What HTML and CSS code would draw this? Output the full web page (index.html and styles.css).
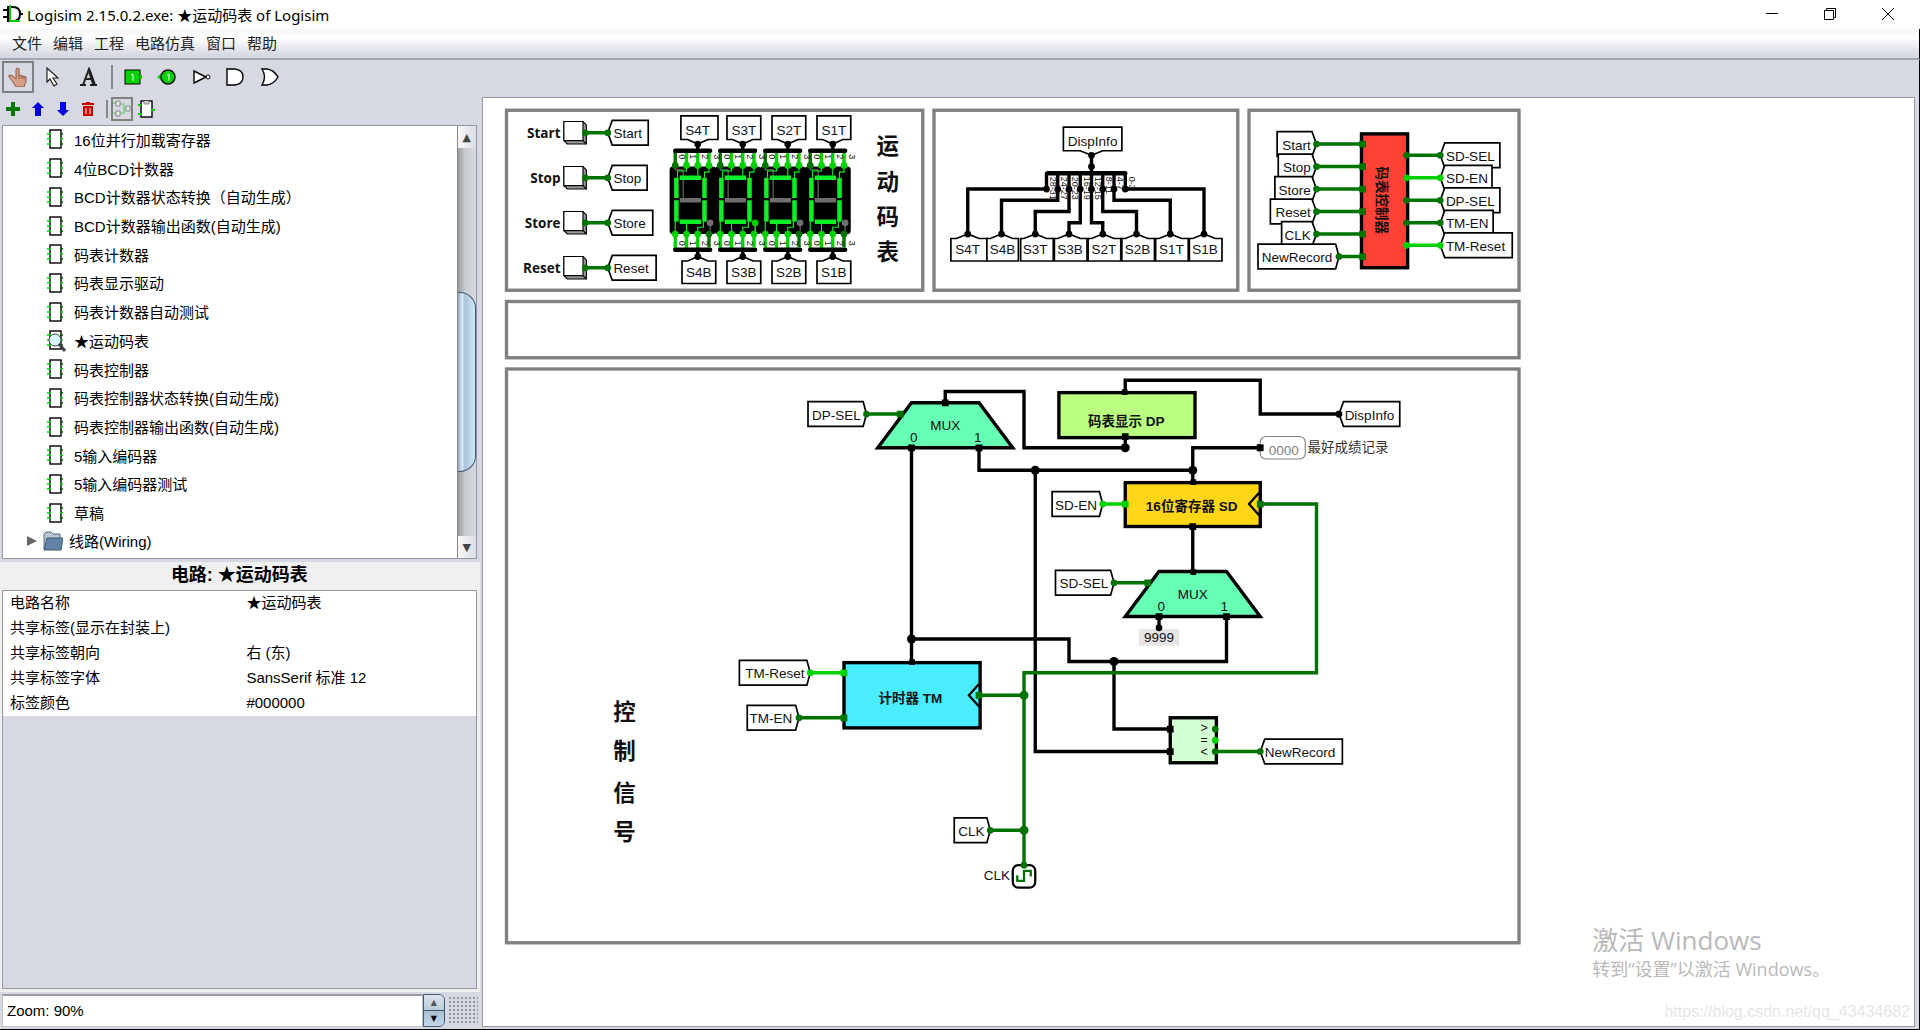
FILE: index.html
```html
<!DOCTYPE html>
<html lang="zh-CN">
<head>
  <meta charset="UTF-8" />
  <meta name="viewport" content="width=device-width, initial-scale=1" />
  <title>Logisim 2.15.0.2.exe: ★运动码表 of Logisim</title>
  <link rel="stylesheet" href="styles.css">
</head>
<body>

<!-- Shared symbols -->
<svg class="defs" aria-hidden="true">
  <symbol id="chip" viewBox="0 0 20 20">
    <rect x="3" y="1" width="11" height="18" fill="#fff" stroke="#000" stroke-width="1.4" />
    <path d="M0 5h4M0 10h4M0 15h4M13 10h3" stroke="#00d200" stroke-width="1.4" />
    <path d="M13 5h3M13 15h3" stroke="#005500" stroke-width="1.4" />
  </symbol>
  <!-- 7-segment digit with its two splitters, origin at the left pin column -->
  <symbol id="digit" viewBox="0 0 50 110" overflow="visible">
    <path class="bus" d="M20 0V6" />
    <path class="on" d="M10 7V20M20 7V20M30 7V20" />
    <path class="off" d="M0 7V20" />
    <path class="on" d="M0 80V93M10 80V93M20 80V93" />
    <path class="spine" d="M0 6H31M0 94H31" />
    <path class="bus" d="M20 94V100" />
    <rect x="-5" y="20" width="41" height="60" rx="3" />
    <path d="M0 20V23H7V48M31 70V80" fill="none" stroke="#6e6e6e" />
    <path d="M10 20V24H2V30M20 20V28M30 20V25H26V30M0 80V69M10 80V70M20 80V74H25V69" fill="none" stroke="#0cf028" />
    <path d="M4 28h19v4H4zM-1 30h4v18h-4zM24 30h4v18h-4zM-1 50h4v19h-4zM24 50h4v19h-4zM4 67h19v4H4z" fill="#0cf028" />
    <path d="M4 48h19v4H4z" fill="#6e6e6e" />
    <g fill="#00d200"><circle cx="10" cy="19" r="3" /><circle cx="20" cy="19" r="3" /><circle cx="30" cy="19" r="3" /><circle cx="0" cy="80" r="3" /><circle cx="10" cy="80" r="3" /><circle cx="20" cy="80" r="3" /></g>
    <circle cx="0" cy="19" r="3" fill="#007300" />
    <circle cx="20" cy="0" r="3" /><circle cx="20" cy="100" r="3" />
  </symbol>
</svg>

<div class="window">

  <header class="titlebar">
    <svg class="app-icon" viewBox="0 0 20 20" width="20" height="20">
      <path d="M5 3h5c5 0 7 3 7 7s-2 7-7 7H5z" fill="#fff" stroke="#000" stroke-width="2" />
      <path d="M0 6h4M0 13h4M17 10h3" stroke="#000" stroke-width="2" />
      <path d="M7 1v16h10" fill="none" stroke="#00c800" stroke-width="2" />
    </svg>
    <h1>Logisim 2.15.0.2.exe: ★运动码表 of Logisim</h1>
    <div class="window-buttons">
      <button aria-label="最小化"><svg viewBox="0 0 12 12" width="12" height="12"><path d="M0 5.5h12" /></svg></button>
      <button aria-label="还原"><svg viewBox="0 0 12 12" width="12" height="12"><path d="M.5 2.5h9v9h-9zM2.500 2.500v-2h9v9h-2" /></svg></button>
      <button aria-label="关闭"><svg viewBox="0 0 12 12" width="12" height="12"><path d="M0 0l12 12M12 0L0 12" /></svg></button>
    </div>
  </header>

  <nav class="menubar">
    <button>文件</button>
    <button>编辑</button>
    <button>工程</button>
    <button>电路仿真</button>
    <button>窗口</button>
    <button>帮助</button>
  </nav>

  <div class="toolbar">
    <div class="tools">
      <button class="tool selected" aria-label="戳工具">
        <svg viewBox="0 0 20 20" width="20" height="20"><path d="M1 8l4 1 3 3V2q1-2 3 0v6l7 2v4l-2 6H8l-3-5-4-5z" fill="#d69f86" stroke="#8a5a44" /><path d="M11 8v4M14 9v3M16 10v2" stroke="#8a5a44" /></svg>
      </button>
      <button class="tool" aria-label="编辑工具">
        <svg viewBox="0 0 20 20" width="20" height="20"><path d="M4 1v14l3-3 4 7 3-2-4-6h5z" fill="#fff" stroke="#222" stroke-width="1.2" /></svg>
      </button>
      <button class="tool" aria-label="文本工具">
        <svg viewBox="0 0 20 20" width="20" height="20"><path d="M2 18h6M12 18h7M5 18l6-16 6 16M7 12h8" fill="none" stroke="#222" stroke-width="2" /><path d="M11 3l5 15" stroke="#222" stroke-width="3" /></svg>
      </button>
    </div>
    <span class="separator"></span>
    <div class="gates">
      <button class="tool" aria-label="输入引脚">
        <svg viewBox="0 0 20 20" width="20" height="20"><rect x="2" y="3" width="15" height="14" fill="#00d200" stroke="#000" /><path d="M17 8h2v4h-2z" fill="#00d200" /><path d="M8 8l2-1v7" fill="none" stroke="#fff" /></svg>
      </button>
      <button class="tool" aria-label="输出引脚">
        <svg viewBox="0 0 20 20" width="20" height="20"><path d="M0 10l5-4v8z" fill="#00d200" /><circle cx="11" cy="10" r="7" fill="#00d200" stroke="#000" stroke-width="1.4" /><path d="M10 8l2-1v7" fill="none" stroke="#fff" /></svg>
      </button>
      <button class="tool" aria-label="非门">
        <svg viewBox="0 0 20 20" width="20" height="20"><path d="M3 4v12l12-6z" fill="#fff" stroke="#000" stroke-width="1.4" /><circle cx="17" cy="10" r="2" fill="#fff" stroke="#000" /></svg>
      </button>
      <button class="tool" aria-label="与门">
        <svg viewBox="0 0 20 20" width="20" height="20"><path d="M2 2h8q8 1 8 8t-8 8H2z" fill="#fff" stroke="#000" stroke-width="1.4" /></svg>
      </button>
      <button class="tool" aria-label="或门">
        <svg viewBox="0 0 20 20" width="20" height="20"><path d="M3 2h5q7 1 11 8-4 7-11 8H3q5-8 0-16z" fill="#fff" stroke="#000" stroke-width="1.4" /></svg>
      </button>
    </div>
  </div>

  <main class="workspace">

    <aside class="side">

      <div class="subtoolbar">
        <button aria-label="添加电路"><svg viewBox="0 0 16 16" width="16" height="16"><path d="M6 1h4v5h5v4h-5v5H6v-5H1V6h5z" fill="#007a00" /></svg></button>
        <button aria-label="上移"><svg viewBox="0 0 16 16" width="16" height="16"><path d="M8 1l6 6h-3v8H5V7H2z" fill="#0000e0" /></svg></button>
        <button aria-label="下移"><svg viewBox="0 0 16 16" width="16" height="16"><path d="M8 15l6-6h-3V1H5v8H2z" fill="#0000e0" /></svg></button>
        <button aria-label="删除电路"><svg viewBox="0 0 16 16" width="16" height="16"><path d="M2 2h4V1h4v1h4v2H2zM3 5h10v10H3z" fill="#cc0000" /><path d="M6 7v6M10 7v6" stroke="#fff" /></svg></button>
        <span class="separator"></span>
        <button class="selected" aria-label="显示电路"><svg viewBox="0 0 18 18" width="18" height="18"><path d="M0 3h3M0 13h3M7 4h4v4h2M7 13h4v-3h2" fill="none" stroke="#96d09a" stroke-width="2" /><path d="M3 1h4v5H3zM3 11h4v5H3zM13 6h4v5h-4z" fill="#e6e8ec" stroke="#8a8a8a" /></svg></button>
        <button aria-label="显示外观"><svg viewBox="0 0 18 18" width="18" height="18"><rect x="4" y="1" width="11" height="16" fill="#fff" stroke="#000" stroke-width="1.4" /><path d="M7 1v3h5V1" fill="#ccc" stroke="#888" /><path d="M1 5h3M1 14h4M14 10h4" stroke="#00d200" stroke-width="2" /></svg></button>
      </div>

      <div class="explorer">
        <div class="tree">
          <ul class="circuits">
            <li><svg class="chip"><use href="#chip" /></svg>16位并行加载寄存器</li>
            <li><svg class="chip"><use href="#chip" /></svg>4位BCD计数器</li>
            <li><svg class="chip"><use href="#chip" /></svg>BCD计数器状态转换（自动生成）</li>
            <li><svg class="chip"><use href="#chip" /></svg>BCD计数器输出函数(自动生成)</li>
            <li><svg class="chip"><use href="#chip" /></svg>码表计数器</li>
            <li><svg class="chip"><use href="#chip" /></svg>码表显示驱动</li>
            <li><svg class="chip"><use href="#chip" /></svg>码表计数器自动测试</li>
            <li><svg class="chip"><use href="#chip" /><circle cx="8" cy="10" r="6" fill="#d8fbff" stroke="#444" /><path d="M12 14l6 7" stroke="#444" stroke-width="3" /></svg>★运动码表</li>
            <li><svg class="chip"><use href="#chip" /></svg>码表控制器</li>
            <li><svg class="chip"><use href="#chip" /></svg>码表控制器状态转换(自动生成)</li>
            <li><svg class="chip"><use href="#chip" /></svg>码表控制器输出函数(自动生成)</li>
            <li><svg class="chip"><use href="#chip" /></svg>5输入编码器</li>
            <li><svg class="chip"><use href="#chip" /></svg>5输入编码器测试</li>
            <li><svg class="chip"><use href="#chip" /></svg>草稿</li>
          </ul>
          <div class="library">
            <svg viewBox="0 0 10 10" width="10" height="10"><path d="M0 0l10 5-10 5z" fill="#666" /></svg>
            <svg viewBox="0 0 20 20" width="20" height="20"><path d="M1 18V3l2-2h5l2 2h7v4" fill="#b9c6d2" stroke="#52677c" /><path d="M1 19L4 7h16l-2 12z" fill="#6283a5" stroke="#3d566f" /></svg>
            <span>线路(Wiring)</span>
          </div>
        </div>
        <div class="scrollbar">
          <button aria-label="向上滚动">▲</button>
          <div class="track"><div class="thumb"></div></div>
          <button aria-label="向下滚动">▼</button>
        </div>
      </div>

      <section class="attributes">
        <h2>电路: ★运动码表</h2>
        <div class="attr-frame">
          <table>
            <tr><th scope="row">电路名称</th><td>★运动码表</td></tr>
            <tr><th scope="row">共享标签(显示在封装上)</th><td></td></tr>
            <tr><th scope="row">共享标签朝向</th><td>右 (东)</td></tr>
            <tr><th scope="row">共享标签字体</th><td>SansSerif 标准 12</td></tr>
            <tr><th scope="row">标签颜色</th><td>#000000</td></tr>
          </table>
        </div>
      </section>

      <div class="zoom">
        <input type="text" value="Zoom: 90%" aria-label="Zoom" />
        <div class="spinner">
          <button aria-label="放大">▲</button>
          <button aria-label="缩小">▼</button>
        </div>
        <span class="grip"></span>
      </div>

    </aside>

    <section class="canvas">
      <svg class="circuit" viewBox="0 0 960 800">

        <!-- Frames -->
        <g class="frame">
          <rect x="20" y="10" width="370" height="160" />
          <rect x="400" y="10" width="270" height="160" />
          <rect x="680" y="10" width="240" height="160" />
          <rect x="20" y="180" width="900" height="50" />
          <rect x="20" y="240" width="900" height="510" />
        </g>

        <!-- Push buttons -->
        <g class="push">
          <path d="M71 20h17l3 3v17H74l-3-3z" /><path d="M71 20h17v17H71zM88 37l3 3" />
          <path d="M71 60h17l3 3v17H74l-3-3z" /><path d="M71 60h17v17H71zM88 77l3 3" />
          <path d="M71 100h17l3 3v17H74l-3-3z" /><path d="M71 100h17v17H71zM88 117l3 3" />
          <path d="M71 140h17l3 3v17H74l-3-3z" /><path d="M71 140h17v17H71zM88 157l3 3" />
        </g>
        <g class="push-label">
          <text x="68" y="35">Start</text>
          <text x="68" y="75">Stop</text>
          <text x="68" y="115">Store</text>
          <text x="68" y="155">Reset</text>
        </g>
        <g class="tunnel">
          <path d="M110 30l4-11h32v22h-32z" /><text x="115" y="35">Start</text>
          <path d="M110 70l4-11h31v22h-31z" /><text x="115" y="75">Stop</text>
          <path d="M110 110l4-11h36v22h-36z" /><text x="115" y="115">Store</text>
          <path d="M110 150l4-11h39v22h-39z" /><text x="115" y="155">Reset</text>
        </g>
        <path class="off" d="M90 30h20M90 70h20M90 110h20M90 150h20" />
        <g class="dot-off">
          <circle cx="90" cy="30" r="3" /><circle cx="110" cy="30" r="3" />
          <circle cx="90" cy="70" r="3" /><circle cx="110" cy="70" r="3" />
          <circle cx="90" cy="110" r="3" /><circle cx="110" cy="110" r="3" />
          <circle cx="90" cy="150" r="3" /><circle cx="110" cy="150" r="3" />
        </g>

        <!-- Stopwatch display -->
        <g class="tunnel middle">
          <path d="M190 40l-9-4h-6V15h33v21h-9z" /><text x="190" y="32">S4T</text>
          <path d="M230 40l-9-4h-5V15h30v21h-7z" /><text x="231" y="32">S3T</text>
          <path d="M270 40l-9-4h-5V15h30v21h-7z" /><text x="271" y="32">S2T</text>
          <path d="M310 40l-9-4h-5V15h30v21h-7z" /><text x="311" y="32">S1T</text>
          <path d="M190 140l-9 4h-5v20h30v-20h-7z" /><text x="191" y="158">S4B</text>
          <path d="M230 140l-9 4h-5v20h30v-20h-7z" /><text x="231" y="158">S3B</text>
          <path d="M270 140l-9 4h-5v20h30v-20h-7z" /><text x="271" y="158">S2B</text>
          <path d="M310 140l-9 4h-5v20h30v-20h-7z" /><text x="311" y="158">S1B</text>
        </g>
        <use href="#digit" x="170" y="40" width="50" height="110" />
        <use href="#digit" x="210" y="40" width="50" height="110" />
        <use href="#digit" x="250" y="40" width="50" height="110" />
        <use href="#digit" x="290" y="40" width="50" height="110" />
        <path class="off" d="M200 120v12M280 120v12M320 120v12" />
        <path class="on" d="M240 120v12" />
        <g class="dot-off"><circle cx="200" cy="120" r="3" /><circle cx="280" cy="120" r="3" /><circle cx="320" cy="120" r="3" /></g>
        <path d="M241 110v10" stroke="#0cf028" />
        <g class="dot-on"><circle cx="240" cy="120" r="3" /><circle cx="241" cy="110" r="3" /></g>
        <g fill="#6e6e6e"><circle cx="201" cy="110" r="3" /><circle cx="281" cy="110" r="3" /><circle cx="321" cy="110" r="3" /></g>
        <g class="bits">
          <text transform="translate(173 49) rotate(90)">0</text><text transform="translate(183 49) rotate(90)">1</text><text transform="translate(194 49) rotate(90)">2</text><text transform="translate(204 49) rotate(90)">3</text>
          <text transform="translate(213 49) rotate(90)">0</text><text transform="translate(223 49) rotate(90)">1</text><text transform="translate(234 49) rotate(90)">2</text><text transform="translate(244 49) rotate(90)">3</text>
          <text transform="translate(253 49) rotate(90)">0</text><text transform="translate(263 49) rotate(90)">1</text><text transform="translate(274 49) rotate(90)">2</text><text transform="translate(284 49) rotate(90)">3</text>
          <text transform="translate(293 49) rotate(90)">0</text><text transform="translate(303 49) rotate(90)">1</text><text transform="translate(314 49) rotate(90)">2</text><text transform="translate(324 49) rotate(90)">3</text>
          <text transform="translate(173 126) rotate(90)">0</text><text transform="translate(183 126) rotate(90)">1</text><text transform="translate(194 126) rotate(90)">2</text><text transform="translate(204 126) rotate(90)">3</text>
          <text transform="translate(213 126) rotate(90)">0</text><text transform="translate(223 126) rotate(90)">1</text><text transform="translate(234 126) rotate(90)">2</text><text transform="translate(244 126) rotate(90)">3</text>
          <text transform="translate(253 126) rotate(90)">0</text><text transform="translate(263 126) rotate(90)">1</text><text transform="translate(274 126) rotate(90)">2</text><text transform="translate(284 126) rotate(90)">3</text>
          <text transform="translate(293 126) rotate(90)">0</text><text transform="translate(303 126) rotate(90)">1</text><text transform="translate(314 126) rotate(90)">2</text><text transform="translate(324 126) rotate(90)">3</text>
        </g>
        <g class="heading">
          <text x="359" y="49">运</text>
          <text x="359" y="81">动</text>
          <text x="359" y="112">码</text>
          <text x="359" y="143">表</text>
        </g>

        <!-- DispInfo splitter -->
        <g class="tunnel middle">
          <path d="M540 50l-10-4h-15V25h52v21h-17z" /><text x="541" y="42">DispInfo</text>
          <path d="M430 120l-10 4h-5v20h32v-20h-7z" /><text x="430" y="138">S4T</text>
          <path d="M460 120l-10 4h-3v20h28v-20h-5z" /><text x="461" y="138">S4B</text>
          <path d="M490 120l-10 4h-3v20h29v-20h-6z" /><text x="490" y="138">S3T</text>
          <path d="M520 120l-10 4h-3v20h29v-20h-6z" /><text x="521" y="138">S3B</text>
          <path d="M550 120l-10 4h-3v20h29v-20h-6z" /><text x="551" y="138">S2T</text>
          <path d="M580 120l-10 4h-3v20h29v-20h-6z" /><text x="581" y="138">S2B</text>
          <path d="M610 120l-10 4h-3v20h29v-20h-6z" /><text x="611" y="138">S1T</text>
          <path d="M640 120l-10 4h-3v20h29v-20h-6z" /><text x="641" y="138">S1B</text>
        </g>
        <path class="bus" d="M540 50V65M500 65V80H430V120M510 65V90H460V120M520 65V100H490V120M530 65V110H520V120M540 65V110H550V120M550 65V100H580V120M560 65V90H610V120M570 65V80H640V120" />
        <path class="spine" d="M501 66H570" />
        <g>
          <circle cx="540" cy="50" r="3" /><circle cx="540" cy="60" r="3" />
          <circle cx="500" cy="80" r="3" /><circle cx="510" cy="80" r="3" /><circle cx="520" cy="80" r="3" /><circle cx="530" cy="80" r="3" />
          <circle cx="540" cy="80" r="3" /><circle cx="550" cy="80" r="3" /><circle cx="560" cy="80" r="3" /><circle cx="570" cy="80" r="3" />
          <circle cx="430" cy="120" r="3" /><circle cx="460" cy="120" r="3" /><circle cx="490" cy="120" r="3" /><circle cx="520" cy="120" r="3" />
          <circle cx="550" cy="120" r="3" /><circle cx="580" cy="120" r="3" /><circle cx="610" cy="120" r="3" /><circle cx="640" cy="120" r="3" />
        </g>
        <g class="bits">
          <text transform="translate(503 69) rotate(90)">28-31</text>
          <text transform="translate(513 69) rotate(90)">24-27</text>
          <text transform="translate(523 69) rotate(90)">20-23</text>
          <text transform="translate(533 69) rotate(90)">16-19</text>
          <text transform="translate(543 69) rotate(90)">12-15</text>
          <text transform="translate(553 69) rotate(90)">8-11</text>
          <text transform="translate(563 69) rotate(90)">4-7</text>
          <text transform="translate(573 69) rotate(90)">0-3</text>
        </g>

        <!-- Controller -->
        <g class="tunnel end">
          <path d="M740 40l-4-11h-31v22h31z" /><text x="735" y="45">Start</text>
          <path d="M740 60l-4-11h-30v22h30z" /><text x="735" y="65">Stop</text>
          <path d="M740 80l-4-11h-33v22h33z" /><text x="735" y="85">Store</text>
          <path d="M740 100l-4-11h-37v22h37z" /><text x="735" y="105">Reset</text>
          <path d="M740 120l-4-11h-27v22h27z" /><text x="735" y="125">CLK</text>
          <path d="M760 140l-3-11h-69v22h69z" /><text x="754" y="145">NewRecord</text>
        </g>
        <g class="tunnel">
          <path d="M850 50l4-11h49v22h-49z" /><text x="855" y="55">SD-SEL</text>
          <path d="M850 70l4-11h42v22h-42z" /><text x="855" y="75">SD-EN</text>
          <path d="M850 90l4-11h49v22h-49z" /><text x="855" y="95">DP-SEL</text>
          <path d="M850 110l4-11h43v22h-43z" /><text x="855" y="115">TM-EN</text>
          <path d="M850 130l4-11h60v22h-60z" /><text x="855" y="135">TM-Reset</text>
        </g>
        <rect class="block" x="780" y="31" width="41" height="119" fill="#ff4238" />
        <path class="off" d="M740 40h40M740 60h40M740 80h40M740 100h40M740 120h40M760 140h20M820 50h30M820 90h30M820 110h30" />
        <path class="on" d="M820 70h30M820 130h30" />
        <g class="dot-off">
          <path d="M778 37h6v6h-6zM778 57h6v6h-6zM778 77h6v6h-6zM778 97h6v6h-6zM778 117h6v6h-6zM778 137h6v6h-6z" />
          <circle cx="740" cy="40" r="3" /><circle cx="740" cy="60" r="3" /><circle cx="740" cy="80" r="3" /><circle cx="740" cy="100" r="3" /><circle cx="740" cy="120" r="3" /><circle cx="760" cy="140" r="3" />
          <circle cx="820" cy="50" r="3" /><circle cx="850" cy="50" r="3" /><circle cx="820" cy="90" r="3" /><circle cx="850" cy="90" r="3" /><circle cx="820" cy="110" r="3" /><circle cx="850" cy="110" r="3" />
        </g>
        <g class="dot-on">
          <circle cx="820" cy="70" r="3" /><circle cx="850" cy="70" r="3" /><circle cx="820" cy="130" r="3" /><circle cx="850" cy="130" r="3" />
        </g>
        <text class="block-label" transform="translate(794 90) rotate(90)">码表控制器</text>

        <!-- Data path -->
        <path class="block" d="M380 270h60l30 40H350z" fill="#66ffb3" />
        <path class="block" d="M600 420h60l30 40H570z" fill="#66ffb3" />
        <rect class="block" x="511" y="261" width="121" height="40" fill="#bbff80" />
        <rect class="block" x="570" y="341" width="120" height="39" fill="#ffd616" />
        <rect class="block" x="320" y="501" width="121" height="58" fill="#48eeff" />
        <rect class="block" x="610" y="550" width="41" height="40" fill="#d3ffd3" />
        <path class="edge" d="M689 350l-9 10 9 10M440 520l-9 10 9 10" />

        <path class="bus" d="M410 270V260H480V310H570V300M570 260V250H690V280H760" />
        <path class="bus" d="M440 310V330H630M630 340V310H690M490 330V580H610M630 380V420" />
        <path class="bus" d="M380 310V500M380 480H520V500H660V460M560 500V560H610M600 460V470" />
        <path class="off" d="M340 280H370M560 430H590M690 360H740V510H480V680M440 530H480M450 650H480M280 550H320M650 580H690" />
        <path class="on" d="M550 360H570M290 510H320" />

        <g class="pins">
          <path d="M407 267h6v6h-6zM377 307h6v6h-6zM437 307h6v6h-6zM567 297h6v6h-6zM567 258h5v5h-5zM687 307h6v6h-6z" />
          <path d="M628 338h5v5h-5zM627 377h6v6h-6zM628 418h5v5h-5zM597 457h6v6h-6zM657 457h6v6h-6zM378 498h5v5h-5zM607 557h6v6h-6zM607 577h6v6h-6z" />
          <circle cx="570" cy="310" r="4" /><circle cx="490" cy="330" r="4" /><circle cx="630" cy="330" r="4" />
          <circle cx="380" cy="480" r="4" /><circle cx="560" cy="500" r="4" /><circle cx="760" cy="280" r="3" />
        </g>

        <g class="tunnel end">
          <path d="M340 280l-3-11h-49v22h49z" /><text x="335" y="285">DP-SEL</text>
          <path d="M550 360l-3-11h-42v22h42z" /><text x="545" y="365">SD-EN</text>
          <path d="M560 430l-3-11h-49v22h49z" /><text x="555" y="435">SD-SEL</text>
          <path d="M290 510l-3-11h-60v22h60z" /><text x="285" y="515">TM-Reset</text>
          <path d="M280 550l-3-11h-43v22h43z" /><text x="274" y="555">TM-EN</text>
          <path d="M450 650l-3-11h-29v22h29z" /><text x="445" y="655">CLK</text>
        </g>
        <g class="tunnel">
          <path d="M760 280l4-11h50v22h-50z" /><text x="765" y="285">DispInfo</text>
          <path d="M690 580l4-11h69v22h-69z" /><text x="694" y="585">NewRecord</text>
        </g>

        <!-- Redraw wire ends over the tunnels -->
        <circle cx="760" cy="280" r="3" />

        <rect x="470" y="681" width="20" height="20" rx="5" fill="#fff" stroke="#000" stroke-width="2" />
        <path d="M474 690v5h6v-9h6v5" fill="none" stroke="#007300" stroke-width="2" />
        <g class="dot-off">
          <path d="M367 277h6v6h-6zM587 427h6v6h-6zM687 357h6v6h-6zM437 527h6v6h-6zM317 547h6v6h-6z" />
          <circle cx="340" cy="280" r="3" /><circle cx="560" cy="430" r="3" /><circle cx="280" cy="550" r="3" /><circle cx="450" cy="650" r="3" />
          <circle cx="480" cy="530" r="4" /><circle cx="480" cy="650" r="4" /><circle cx="480" cy="681" r="3" />
          <circle cx="650" cy="560" r="3" /><circle cx="650" cy="580" r="3" /><circle cx="690" cy="580" r="3" />
        </g>
        <g class="dot-on">
          <path d="M567 357h6v6h-6zM317 507h6v6h-6z" />
          <circle cx="550" cy="360" r="3" /><circle cx="290" cy="510" r="3" /><circle cx="650" cy="570" r="3" />
        </g>

        <rect x="690" y="300" width="40" height="20" rx="5" fill="#fff" stroke="#808080" />
        <path d="M687 307h6v6h-6z" />
        <rect x="582" y="471" width="36" height="15" fill="#e6e6e6" />
        <circle cx="600" cy="470" r="3" />

        <g class="label middle">
          <text x="410" y="294">MUX</text><text x="382" y="305">0</text><text x="439" y="305">1</text>
          <text x="630" y="444">MUX</text><text x="602" y="455">0</text><text x="658" y="455">1</text>
          <text x="711" y="316" class="probe">0000</text>
          <text x="600" y="483">9999</text>
          <text x="456" y="694">CLK</text>
          <text x="640" y="563" class="sign">&gt;</text><text x="640" y="573" class="sign">=</text><text x="640" y="584" class="sign">&lt;</text>
        </g>
        <text class="note" x="732" y="314">最好成绩记录</text>
        <g class="block-label">
          <text x="571" y="291">码表显示 DP</text>
          <text x="629" y="366">16位寄存器 SD</text>
          <text x="379" y="537">计时器 TM</text>
        </g>
        <g class="heading">
          <text x="125" y="552">控</text>
          <text x="125" y="587">制</text>
          <text x="125" y="624">信</text>
          <text x="125" y="659">号</text>
        </g>
      </svg>

      <div class="activate">
        <strong>激活 Windows</strong>
        <span>转到“设置”以激活 Windows。</span>
      </div>
      <div class="source">https://blog.csdn.net/qq_43434682</div>
    </section>

  </main>
</div>

</body>
</html>
```
FILE: styles.css
```css
* { box-sizing: border-box; }
body {
  margin: 0;
  background: #d6d9e1;
  color: #000;
  font-family: "Liberation Sans", "Noto Sans CJK SC", sans-serif;
  font-size: 15px;
}
button { margin: 0; padding: 0; border: none; background: none; color: inherit; font: inherit; }
h1, h2, ul { margin: 0; padding: 0; }
.defs { position: absolute; width: 0; height: 0; }

.window {
  display: flex;
  flex-direction: column;
  height: 100vh;
  border-bottom: 1px solid #000;
}

/* Title bar and menu */
.titlebar { display: flex; align-items: center; height: 29px; padding: 0 3px 1px; background: #fff; }
.titlebar h1 { margin-left: 4px; font: 400 15px "Noto Sans", "Noto Sans CJK SC", sans-serif; }
.window-buttons { display: flex; margin-left: auto; }
.window-buttons button { display: grid; place-items: center; width: 58px; height: 28px; }
.window-buttons path { fill: none; stroke: #000; }
.menubar {
  display: flex;
  gap: 11px;
  height: 31px;
  padding: 0 0 2px 12px;
  border-right: 1px solid #000;
  border-bottom: 2px solid #a3a6b3;
  background: linear-gradient(#f5f6f7, #fff 30%, #d6d9e1 90%);
  color: #222;
}

/* Toolbars */
.toolbar { display: flex; align-items: center; height: 37px; padding: 0 0 4px 2px; border-right: 1px solid #000; }
.tools { display: flex; gap: 3px; }
.gates { display: flex; gap: 2px; }
.tool { display: grid; place-items: center; width: 32px; height: 32px; }
.selected { border: 2px solid #808080; }
.separator { width: 2px; height: 24px; margin: 0 4px 0 8px; background: #888; }
.tools + .separator { margin-left: 7px; }
.subtoolbar { display: flex; align-items: center; height: 28px; padding-bottom: 5px; }
.subtoolbar button { display: grid; place-items: center; width: 25px; height: 24px; }
.subtoolbar .separator { height: 18px; margin: 0 3px 0 6px; }
.subtoolbar .selected { width: 22px; }

.workspace { display: flex; flex: 1; min-height: 0; border-right: 1px solid #000; }
.side { display: flex; flex-direction: column; flex: 0 0 25%; }

/* Explorer */
.explorer { display: flex; height: 434px; margin: 0 3px 3px 2px; border: 1px solid #9297a1; background: #fff; }
.tree { flex: 1; }
.circuits { display: flex; flex-direction: column; height: 402px; list-style: none; }
.circuits li { display: flex; flex: 1; align-items: center; padding: 0 0 2px 44px; }
.chip { width: 20px; height: 20px; margin-right: 7px; overflow: visible; }
.library { display: flex; align-items: center; height: 26px; padding: 0 0 1px 24px; }
.library span { margin-left: 6px; }
.library svg + svg { margin-left: 6px; }
.scrollbar { display: flex; flex-direction: column; width: 19px; border-left: 1px solid #888; background: linear-gradient(90deg, #999ca3, #c9cbd0 40%, #d6d9e1); }
.scrollbar button { height: 22px; background: linear-gradient(90deg, #f7f7f8, #dcdee3); color: #444; font: 11px "DejaVu Sans", sans-serif; }
.track { flex: 1; padding-top: 144px; }
.thumb {
  height: 180px;
  border: 1px solid #3f5870;
  border-left: none;
  border-radius: 0 16px 16px 0;
  background: linear-gradient(90deg, #8fa9c1, #dfeaf4 25%, #a9c2d8 40%, #d3e7f6);
}

/* Attribute table */
.attributes { display: flex; flex: 1; flex-direction: column; padding: 0 3px 3px 2px; background: #f0f0f0; }
.attributes h2 { height: 28px; font-size: 18px; line-height: 26px; text-align: center; }
.attr-frame { flex: 1; border: 1px solid #9297a1; background: #d6d9e1; }
table { width: 100%; border-collapse: collapse; background: #fff; }
tr { height: 25px; }
th, td { width: 50%; padding: 0 0 1px 7px; font-weight: 400; line-height: 20px; text-align: left; }

/* Zoom bar */
.zoom { display: flex; height: 37px; padding: 2px; }
.zoom input {
  flex: 1;
  min-width: 0;
  padding: 0 4px 2px;
  border: 1px solid #c0c3ca;
  border-top: 2px solid #9a9da3;
  background: #fff;
  color: #000;
  font: inherit;
}
.spinner { display: flex; flex-direction: column; width: 22px; overflow: hidden; border: 1px solid #3f5870; border-radius: 0 6px 6px 0; }
.spinner button { flex: 1; background: linear-gradient(#dbe4ec, #b9cad9); color: #555; font: 8px "DejaVu Sans", sans-serif; }
.spinner button + button { border-top: 1px solid #3f5870; background: linear-gradient(#a9bfd3, #c1d6e8); color: #000; }
.grip { width: 30px; margin: 2px 0 2px 3px; background: radial-gradient(circle, #9297a1 1px, transparent 1px) 0 0 / 4px 4px; }

/* Canvas */
.canvas {
  position: relative;
  flex: 1;
  min-width: 0;
  margin: 0 4px 2px 2px;
  padding: 1px 0 0 1px;
  overflow: hidden;
  border: 1px solid #9297a1;
  background: #fff;
}
.circuit { display: block; width: 1080px; height: 900px; font-size: 12px; }
.circuit text { fill: #111; }
.frame { fill: none; stroke: #808080; stroke-width: 3; }
.bus, .on, .off { fill: none; stroke: #000; stroke-width: 3; }
.on { stroke: #00d200; }
.off { stroke: #007300; }
.dot-on { fill: #00d200; }
.dot-off { fill: #007300; }
.spine { fill: none; stroke: #000; stroke-width: 4; stroke-linecap: round; }
.block { stroke: #000; stroke-width: 3; }
.edge { fill: none; stroke: #000; stroke-width: 2; }
.tunnel path { fill: #fff; stroke: #000; stroke-width: 1.5; }
.middle { text-anchor: middle; }
.end { text-anchor: end; }
.push path { fill: #fff; stroke: #000; }
.push path:nth-child(odd) { fill: #999; }
.push-label { font-family: "Open Sans", sans-serif; font-weight: 700; text-anchor: end; }
.bits { font-size: 8px; }
.sign { font-size: 11px; }
.block-label { font-weight: 700; text-anchor: middle; }
.heading { font-size: 20px; font-weight: 700; text-anchor: middle; }
.circuit .probe { fill: #808080; }
.circuit .note { fill: #333; }

/* Watermarks */
.activate {
  position: absolute;
  right: 84px;
  bottom: 45px;
  display: flex;
  flex-direction: column;
  color: #b9b9b9;
  font-family: "Open Sans", "Noto Sans CJK SC", sans-serif;
  font-size: 18px;
  line-height: 24px;
}
.activate strong { font-size: 26px; font-weight: 400; line-height: 34px; }
.source { position: absolute; right: 4px; bottom: 5px; color: #e6e6e6; font-size: 16px; }
```
